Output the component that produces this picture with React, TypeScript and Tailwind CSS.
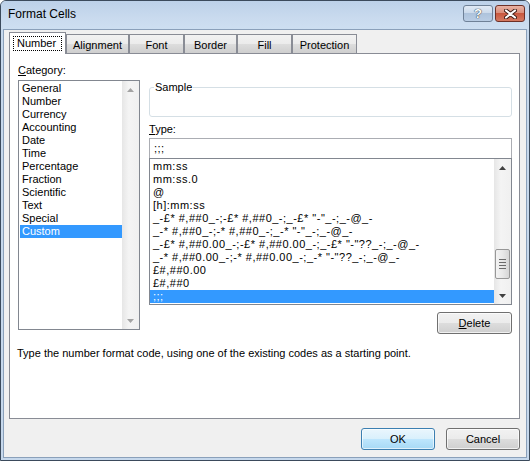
const categories = [
  "General",
  "Number",
  "Currency",
  "Accounting",
  "Date",
  "Time",
  "Percentage",
  "Fraction",
  "Scientific",
  "Text",
  "Special",
  "Custom",
];

const formats = [
  "mm:ss",
  "mm:ss.0",
  "@",
  "[h]:mm:ss",
  '_-£* #,##0_-;-£* #,##0_-;_-£* "-"_-;_-@_-',
  '_-* #,##0_-;-* #,##0_-;_-* "-"_-;_-@_-',
  '_-£* #,##0.00_-;-£* #,##0.00_-;_-£* "-"??_-;_-@_-',
  '_-* #,##0.00_-;-* #,##0.00_-;_-* "-"??_-;_-@_-',
  "£#,##0.00",
  "£#,##0",
  ";;;",
];

const tabs = [
  { label: "Alignment", w: "w-[63px]" },
  { label: "Font", w: "w-[55px]" },
  { label: "Border", w: "w-[53px]" },
  { label: "Fill", w: "w-[55px]" },
  { label: "Protection", w: "w-[65px]" },
];

const Arrow = ({ up, color }: { up?: boolean; color: string }) => (
  <svg width="7" height="4" viewBox="0 0 7 4">
    <polygon points={up ? "3.5,0 7,4 0,4" : "0,0 7,0 3.5,4"} fill={color} />
  </svg>
);

// vista style vertical scrollbar
const ScrollBar = ({ disabled }: { disabled?: boolean }) => {
  const color = disabled ? "#a3a3a3" : "#404040";
  return (
    <div className="flex h-full w-[17px] flex-col bg-[linear-gradient(to_right,#e6e6e6,#f4f4f4_40%,#f0f0f0)]">
      <div className="flex h-[17px] items-center justify-center">
        <Arrow up color={color} />
      </div>
      <div className="flex flex-1 flex-col justify-end">
        {!disabled && (
          <div className="mx-px mb-[8px] flex h-[30px] flex-col items-center justify-center gap-[2px] rounded-[2px] border border-[#979797] bg-[linear-gradient(to_right,#f3f3f3,#e8e8e8_50%,#d6d6d6)]">
            <div className="h-px w-[7px] bg-[#6b6b6b]" />
            <div className="h-px w-[7px] bg-[#6b6b6b]" />
            <div className="h-px w-[7px] bg-[#6b6b6b]" />
            <div className="h-px w-[7px] bg-[#6b6b6b]" />
          </div>
        )}
      </div>
      <div className="flex h-[17px] items-center justify-center">
        <Arrow color={color} />
      </div>
    </div>
  );
};

const Button = ({
  children,
  primary,
}: {
  children: React.ReactNode;
  primary?: boolean;
}) => (
  <button
    type="button"
    className={
      primary
        ? "flex h-[22px] w-[74px] items-center justify-center rounded-[3px] border border-[#3c7fb1] bg-[linear-gradient(to_bottom,#eaf6fd,#d9f0fc_50%,#bee6fd_50%,#a7d9f5)] text-[11px] text-black shadow-[inset_0_0_0_1px_#ffffffa0]"
        : "flex h-[22px] w-[74px] items-center justify-center rounded-[3px] border border-[#707070] bg-[linear-gradient(to_bottom,#f2f2f2,#ebebeb_50%,#dddddd_50%,#cfcfcf)] text-[11px] text-black shadow-[inset_0_0_0_1px_#ffffffb0]"
    }
  >
    {children}
  </button>
);

export default function App() {
  return (
    <div className="flex h-[461px] w-[530px] flex-col overflow-hidden rounded-t-[6px] border border-[#3b4a5c] bg-[#c6d8ec] font-['Liberation_Sans',Arial,sans-serif] text-[11px] leading-[13px] text-black">
      {/* title bar */}
      <div className="flex h-[28px] items-start bg-[linear-gradient(to_bottom,#bcd1e9,#c9daee_60%,#cddff1)] pl-[7px] pr-[4px] pt-[4px]">
        <div className="mt-[2px] text-[12px] leading-[15px] text-black">Format Cells</div>
        <div className="flex-1" />
        <div className="flex h-[17px] w-[30px] items-center justify-center rounded-[3px] border border-[#6f8197] bg-[linear-gradient(to_bottom,#e1eaf5,#c9d8ea_50%,#aec3dc_50%,#b9cde4)] text-[13px] font-bold leading-none text-white [text-shadow:0_0_1px_#1f2d3d,0_0_1px_#1f2d3d]">
          ?
        </div>
        <div className="ml-[2px] flex h-[17px] w-[30px] items-center justify-center rounded-[3px] border border-[#6e3027] bg-[linear-gradient(to_bottom,#e8b2a4,#d98a76_50%,#c9583f_50%,#d47a62)]">
          <svg width="13" height="10" viewBox="0 0 13 10">
            <path d="M2 1.5 L11 8.5 M11 1.5 L2 8.5" stroke="#3a1a14" strokeWidth="4" strokeLinecap="round" />
            <path d="M2 1.5 L11 8.5 M11 1.5 L2 8.5" stroke="#ffffff" strokeWidth="2.2" strokeLinecap="round" />
          </svg>
        </div>
      </div>

      {/* dialog body */}
      <div className="mx-[2px] mb-[2px] flex flex-1 flex-col border border-[#8aa0ba] bg-[#f0f0f0] pl-[5px] pr-[6px] pt-[2px]">
        {/* tabs */}
        <div className="flex h-[21px] items-end">
          <div className="relative z-10 -mb-px flex h-[22px] w-[57px] items-start justify-center border border-b-0 border-[#898c95] bg-white pt-[3px]">
            <span className="border border-dotted border-black pl-[3px] pr-[5px] leading-[13px]">Number</span>
          </div>
          {tabs.map((t) => (
            <div
              key={t.label}
              className={`flex h-[19px] ${t.w} items-center justify-center border border-b-0 border-[#898c95] bg-[linear-gradient(to_bottom,#f2f2f2,#ebebeb_50%,#dddddd_50%,#cfcfcf)] pt-[2px]`}
            >
              {t.label}
            </div>
          ))}
        </div>

        {/* tab panel */}
        <div className="flex h-[366px] flex-col border border-[#898c95] bg-white">
          <div className="flex pl-[8px] pt-[10px]">
            {/* category */}
            <div className="flex w-[122px] flex-col">
              <div className="h-[13px]">
                <span className="underline">C</span>ategory:
              </div>
              <div className="mt-[3px] flex h-[250px] border border-[#828790]">
                <div className="flex flex-1 flex-col pt-px">
                  {categories.map((c) => (
                    <div
                      key={c}
                      className={
                        c === "Custom"
                          ? "ml-px h-[13px] bg-[#3399ff] pl-[2px] text-white"
                          : "ml-px h-[13px] pl-[2px]"
                      }
                    >
                      {c}
                    </div>
                  ))}
                </div>
                <ScrollBar disabled />
              </div>
            </div>

            {/* type */}
            <div className="ml-[9px] flex w-[363px] flex-col">
              <div className="relative mt-[23px] h-[30px] rounded-[3px] border border-[#d5dfe5]">
                <span className="absolute -top-[7px] left-[4px] bg-white px-px">Sample</span>
              </div>
              <div className="mt-[6px] h-[13px]">
                <span className="underline">T</span>ype:
              </div>
              <div className="mt-[2px] flex h-[20px] items-center border border-b-0 border-[#abadb3] pl-[4px] tracking-[0.5px]">
                ;;;
              </div>
              <div className="flex h-[147px] border border-[#828790]">
                <div className="flex flex-1 flex-col pt-px">
                  {formats.map((f) => (
                    <div
                      key={f}
                      className={
                        f === ";;;"
                          ? "h-[13px] whitespace-pre bg-[#3399ff] pl-[3px] tracking-[0.5px] text-white"
                          : "h-[13px] whitespace-pre pl-[3px] tracking-[0.5px]"
                      }
                    >
                      {f}
                    </div>
                  ))}
                </div>
                <ScrollBar />
              </div>
              <div className="mt-[7px] flex justify-end">
                <button
                  type="button"
                  className="flex h-[22px] w-[75px] items-center justify-center rounded-[3px] border border-[#707070] bg-[linear-gradient(to_bottom,#f2f2f2,#ebebeb_50%,#dddddd_50%,#cfcfcf)] text-[11px] shadow-[inset_0_0_0_1px_#ffffffb0]"
                >
                  <span className="underline">D</span>elete
                </button>
              </div>
            </div>
          </div>

          <div className="mt-[13px] pl-[7px]">
            Type the number format code, using one of the existing codes as a starting point.
          </div>
        </div>

        {/* dialog buttons */}
        <div className="mt-[9px] flex justify-end gap-[11px]">
          <Button primary>OK</Button>
          <Button>Cancel</Button>
        </div>
      </div>
    </div>
  );
}
